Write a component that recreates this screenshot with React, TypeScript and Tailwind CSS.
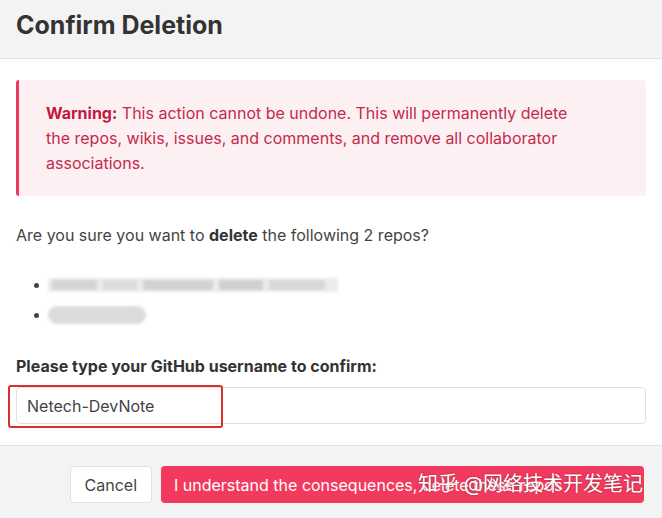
export default function App() {
  return (
    <div className="w-[662px] h-[518px] bg-white overflow-hidden flex flex-col text-[#3d3d3d]" style={{ fontFamily: 'Inter, "Noto Sans CJK SC", sans-serif' }}>
      <div className="h-[59px] shrink-0 bg-[#f3f3f3] border-b border-[#e2e2e2] px-4 flex items-center">
        <h1 className="text-[25px] font-bold text-[#333] leading-none -mt-[7px]">Confirm Deletion</h1>
      </div>

      <div className="flex-1 px-4 pt-[21px]">
        <div className="bg-[#fdf0f3] border-l-[3px] border-[#ea3a5c] rounded-[3px] pl-[27px] pr-[62px] pt-[21px] pb-[20px] text-[16px] leading-[25px] text-[#c32a4c]">
          <b className="font-bold text-[#c0183f]">Warning:</b> This action cannot be undone. This will permanently delete the repos, wikis, issues, and comments, and remove all collaborator associations.
        </div>

        <p className="mt-[27px] text-[16px] leading-[25px] text-[#444]">
          Are you sure you want to <b className="font-bold text-[#333]">delete</b> the following 2 repos?
        </p>

        <ul className="mt-[27px] pl-[18px] flex flex-col gap-[10px]">
          <li className="flex items-center gap-[9px] h-[20px]">
            <span className="w-[5px] h-[5px] rounded-full bg-[#444]" />
            <div className="flex items-center w-[290px] h-[14px] bg-[#ececec] blur-[1.5px] gap-[6px] px-[4px]">
              <span className="w-[45px] h-[10px] bg-[#d4d4d4]" />
              <span className="w-[34px] h-[10px] bg-[#dcdcdc]" />
              <span className="w-[70px] h-[10px] bg-[#d2d2d2]" />
              <span className="w-[44px] h-[10px] bg-[#cfcfcf]" />
              <span className="w-[56px] h-[10px] bg-[#d8d8d8]" />
            </div>
          </li>
          <li className="flex items-center gap-[9px] h-[20px]">
            <span className="w-[5px] h-[5px] rounded-full bg-[#444]" />
            <div className="w-[98px] h-[18px] rounded-[9px] bg-[#dcdcdc] blur-[1.5px]" />
          </li>
        </ul>

        <label className="block mt-[29px] text-[16px] font-bold text-[#333] leading-[25px]">
          Please type your GitHub username to confirm:
        </label>
        <div className="relative mt-[8px]">
          <div className="h-[37px] border border-[#e0e0e0] rounded-[4px] flex items-center px-[10px] text-[16px] text-[#444]">
            Netech-DevNote
          </div>
          <div className="absolute left-[-8px] top-[-2px] w-[215px] h-[43px] border-2 border-[#d9302c] rounded-[3px]" />
        </div>
      </div>

      <div className="h-[73px] shrink-0 bg-[#f3f3f3] border-t border-[#e2e2e2] px-[18px] pt-[5px] flex items-center justify-end gap-[9px]">
        <button className="h-[37px] px-[14px] bg-white border border-[#e2e2e2] rounded-[4px] text-[16px] text-[#444]">
          Cancel
        </button>
        <div className="relative">
          <button className="h-[37px] w-[483px] bg-[#f23a5e] rounded-[4px] text-[16px] text-white text-left pl-[13px] whitespace-nowrap overflow-hidden">
            I understand the consequences, delete these repos
          </button>
          <span className="absolute right-[1px] top-[6px] text-[20px] leading-[24px] text-white whitespace-nowrap [text-shadow:0_0_2px_rgba(0,0,0,0.45)]">
            知乎 @网络技术开发笔记
          </span>
        </div>
      </div>
    </div>
  )
}
